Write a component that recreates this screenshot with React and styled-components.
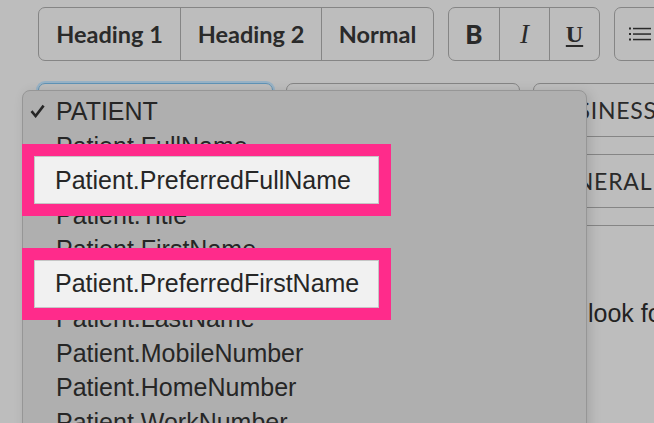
import React from "react";
import styled, { createGlobalStyle } from "styled-components";

const GlobalStyle = createGlobalStyle`
  html, body {
    margin: 0;
    padding: 0;
    background: #bdbdbd;
    overflow: hidden;
  }
  * { box-sizing: border-box; }
`;

const Page = styled.div`
  position: relative;
  width: 654px;
  height: 423px;
  overflow: hidden;
  padding: 7px 0 0 38px;
  background: #bdbdbd;
  font-family: "Lato", "Liberation Sans", sans-serif;
  color: #2a2a2a;
`;

const Toolbar = styled.div`
  display: flex;
  gap: 14px;
  width: max-content;
`;

const Group = styled.div`
  display: flex;
  flex-shrink: 0;
  height: 54px;
  border: 1.5px solid #858585;
  border-radius: 7px;
  overflow: hidden;
`;

const ToolButton = styled.div`
  width: ${(p) => p.$w}px;
  display: flex;
  align-items: center;
  justify-content: center;
  font-family: "Lato", sans-serif;
  font-weight: 700;
  font-size: 23.5px;
  color: #2a2a2a;
  & + & {
    border-left: 1.5px solid #858585;
  }
`;

const BoldGlyph = styled.span`
  font-family: "Lato", sans-serif;
  font-weight: 900;
  font-size: 26px;
`;

const ItalicGlyph = styled.span`
  font-family: "Liberation Serif", serif;
  font-style: italic;
  font-weight: 400;
  font-size: 27px;
`;

const UnderGlyph = styled.span`
  font-family: "Liberation Serif", serif;
  font-weight: 700;
  font-size: 24px;
  text-decoration: underline;
  text-underline-offset: 3px;
  text-decoration-thickness: 2px;
`;

const FieldGrid = styled.div`
  display: grid;
  grid-template-columns: 235px 234px 240px;
  column-gap: 13px;
  margin-top: 22px;
  width: max-content;
`;

const FieldStack = styled.div`
  display: flex;
  flex-direction: column;
  gap: 17px;
`;

const Field = styled.div`
  height: 54px;
  border: 1.5px solid ${(p) => (p.$focused ? "#5f93b6" : "#858585")};
  box-shadow: ${(p) => (p.$focused ? "0 0 0 2px rgba(120,170,205,0.55)" : "none")};
  border-radius: 7px;
  display: flex;
  align-items: center;
  padding-left: 10px;
  font-family: "Lato", sans-serif;
  font-size: 23px;
  letter-spacing: 0.8px;
  color: #2a2a2a;
  white-space: nowrap;
`;

const Editor = styled.div`
  height: 260px;
  border: 1.5px solid #858585;
  border-radius: 7px;
  padding: 72px 0 0 54px;
  font-family: "Liberation Sans", sans-serif;
  font-size: 25px;
  line-height: 30px;
  color: #222;
  white-space: nowrap;
`;

const Dropdown = styled.div`
  position: absolute;
  left: 22px;
  top: 90px;
  width: 565px;
  height: 420px;
  background: #afafaf;
  border: 1px solid #969696;
  border-radius: 8px;
  box-shadow: 3px 2px 12px rgba(0, 0, 0, 0.13);
  padding-top: 3px;
  z-index: 5;
`;

const MenuItem = styled.div`
  position: relative;
  height: 34.5px;
  display: flex;
  align-items: center;
  font-family: "Liberation Sans", "Arial", sans-serif;
  font-size: 25px;
  line-height: 34.5px;
  color: #262626;
  white-space: nowrap;
`;

const CheckSlot = styled.span`
  width: 33px;
  padding-left: 7px;
  display: flex;
  align-items: center;
`;

const Callout = styled.div`
  position: absolute;
  left: -1px;
  top: -19px;
  width: 369px;
  height: 72px;
  padding: 12px;
  background: #ff2b8b;
  z-index: 2;
`;

const CalloutInner = styled.div`
  height: 100%;
  display: flex;
  align-items: center;
  padding-left: 20px;
  background: #f1f1f1;
  border: 1px solid #c6c6c6;
`;

const CheckIcon = () => (
  <svg width="15" height="14" viewBox="0 0 15 14">
    <path d="M1.5 7.2 L5.6 12 L13.6 1.6" fill="none" stroke="#262626" strokeWidth="2.6" strokeLinecap="butt" strokeLinejoin="miter" />
  </svg>
);

const ListIcon = () => (
  <svg width="22" height="16" viewBox="0 0 22 16">
    <g fill="#2a2a2a">
      <rect x="0" y="1.5" width="2" height="2" />
      <rect x="0" y="7" width="2" height="2" />
      <rect x="0" y="12.5" width="2" height="2" />
      <rect x="4" y="1.8" width="18" height="1.5" />
      <rect x="4" y="7.3" width="18" height="1.5" />
      <rect x="4" y="12.8" width="18" height="1.5" />
    </g>
  </svg>
);

const items = [
  { label: "PATIENT", checked: true },
  { label: "Patient.FullName" },
  { label: "Patient.PreferredFullName", highlight: true },
  { label: "Patient.Title" },
  { label: "Patient.FirstName" },
  { label: "Patient.PreferredFirstName", highlight: true },
  { label: "Patient.LastName" },
  { label: "Patient.MobileNumber" },
  { label: "Patient.HomeNumber" },
  { label: "Patient.WorkNumber" },
  { label: "Patient.Email" },
];

export default function App() {
  return (
    <>
      <GlobalStyle />
      <Page>
        <Toolbar>
          <Group>
            <ToolButton $w={141}>Heading 1</ToolButton>
            <ToolButton $w={141}>Heading 2</ToolButton>
            <ToolButton $w={112}>Normal</ToolButton>
          </Group>
          <Group>
            <ToolButton $w={50}><BoldGlyph>B</BoldGlyph></ToolButton>
            <ToolButton $w={50}><ItalicGlyph>I</ItalicGlyph></ToolButton>
            <ToolButton $w={50}><UnderGlyph>U</UnderGlyph></ToolButton>
          </Group>
          <Group>
            <ToolButton $w={50}><ListIcon /></ToolButton>
            <ToolButton $w={50}>1.</ToolButton>
          </Group>
        </Toolbar>

        <FieldGrid>
          <FieldStack>
            <Field $focused>PATIENT</Field>
            <Field>PRACTICE</Field>
          </FieldStack>
          <FieldStack>
            <Field>APPOINTMENT</Field>
            <Field>PRACTITIONER</Field>
          </FieldStack>
          <FieldStack>
            <Field>BUSINESS</Field>
            <Field>GENERAL</Field>
            <Editor>look for</Editor>
          </FieldStack>
        </FieldGrid>

        <Dropdown>
          {items.map((it) => (
            <MenuItem key={it.label}>
              <CheckSlot>{it.checked ? <CheckIcon /> : null}</CheckSlot>
              {it.label}
              {it.highlight ? (
                <Callout>
                  <CalloutInner>{it.label}</CalloutInner>
                </Callout>
              ) : null}
            </MenuItem>
          ))}
        </Dropdown>
      </Page>
    </>
  );
}
